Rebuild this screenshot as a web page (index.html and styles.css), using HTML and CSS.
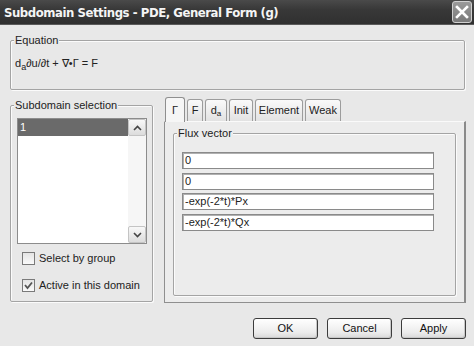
FILE: index.html
```html
<!DOCTYPE html>
<html>
<head>
<meta charset="utf-8">
<link rel="stylesheet" href="styles.css">
</head>
<body>
<div class="dialog">
  <div class="titlebar">
    <span class="title">Subdomain Settings - PDE, General Form (g)</span>
    <span class="close"><svg width="14" height="14" viewBox="0 0 14 14"><path d="M2 2 L12 12 M12 2 L2 12" stroke="#fff" stroke-width="2.6" stroke-linecap="square"/></svg></span>
  </div>
  <div class="content">
    <div class="group eq">
      <span class="legend">Equation</span>
      <div class="eqtext">d<sub>a</sub>∂u/∂t + ∇•Γ = F</div>
    </div>
    <div class="row">
      <div class="group sub">
        <span class="legend">Subdomain selection</span>
        <div class="listbox">
          <div class="items"><div class="item sel">1</div></div>
          <div class="scroll">
            <div class="sbtn"><svg width="9" height="6" viewBox="0 0 9 6"><path d="M1 5 L4.5 1.5 L8 5" fill="none" stroke="#444" stroke-width="1.6"/></svg></div>
            <div class="track"></div>
            <div class="sbtn"><svg width="9" height="6" viewBox="0 0 9 6"><path d="M1 1 L4.5 4.5 L8 1" fill="none" stroke="#444" stroke-width="1.6"/></svg></div>
          </div>
        </div>
        <label class="check first"><span class="box"></span>Select by group</label>
        <label class="check second"><span class="box"><svg width="11" height="11" viewBox="0 0 11 11"><path d="M2 5 L4.5 8 L9 2.5" fill="none" stroke="#555" stroke-width="1.8"/></svg></span>Active in this domain</label>
      </div>
      <div class="tabs">
        <div class="tabstrip">
          <span class="tab active">Γ</span>
          <span class="tab t-f">F</span>
          <span class="tab t-d">d<sub>a</sub></span>
          <span class="tab t-i">Init</span>
          <span class="tab t-e">Element</span>
          <span class="tab t-w">Weak</span>
        </div>
        <div class="panel">
          <div class="group flux">
            <span class="legend">Flux vector</span>
            <div class="field">0</div>
            <div class="field">0</div>
            <div class="field">-exp(-2*t)*Px</div>
            <div class="field">-exp(-2*t)*Qx</div>
          </div>
        </div>
      </div>
    </div>
    <div class="buttons">
      <span class="btn">OK</span>
      <span class="btn">Cancel</span>
      <span class="btn">Apply</span>
    </div>
  </div>
</div>
</body>
</html>
```

FILE: styles.css
```css
* { box-sizing: border-box; }
html, body { margin: 0; padding: 0; }
body { background: #e8e8e8; font-family: "Liberation Sans", Arial, sans-serif; font-size: 11px; color: #111; }
.dialog { width: 474px; height: 346px; background: #e8e8e8; overflow: hidden; }
.titlebar {
  height: 25px;
  background: linear-gradient(#4a4a4a, #383838 40%, #303030);
  border-bottom: 1px solid #5a5a5a;
  display: flex; align-items: center; justify-content: space-between;
  padding: 0 2px 0 4px;
}
.title { color: #f4f4f4; font-weight: bold; font-size: 13px; font-family: "DejaVu Sans Condensed", "DejaVu Sans", sans-serif; letter-spacing: -0.45px; }
.close {
  width: 20px; height: 22px;
  background: linear-gradient(#9a9a9a, #7a7a7a);
  border: 1px solid #d0d0d0; border-radius: 3px;
  display: flex; align-items: center; justify-content: center;
}
.content { padding: 0 8px 0 10px; }
.group {
  position: relative;
  border: 1px solid #a4a4a4;
  box-shadow: inset 1px 1px 0 #fbfbfb, 1px 1px 0 #fbfbfb;
  border-radius: 2px;
}
.legend {
  position: absolute; top: -7px; left: 3px;
  background: #e8e8e8; padding: 0 1px; line-height: 13px; color: #222;
}
.eq { margin-top: 15px; width: 455px; height: 50px; padding: 15px 0 0 4px; }
.eqtext { line-height: 14px; color: #222; }
sub { font-size: 9px; vertical-align: -3px; line-height: 0; }
.row { display: flex; margin-top: 7px; }
.sub { margin-top: 8px; width: 143px; height: 197px; padding: 12px 0 0 6px; }
.listbox { width: 130px; height: 126px; border: 1px solid #8c8c8c; background: #fff; display: flex; }
.items { flex: 1; }
.item { height: 17px; line-height: 17px; padding-left: 2px; color: #fff; }
.item.sel { background: #6a6a6a; }
.scroll { width: 18px; display: flex; flex-direction: column; background: #f6f6f6; }
.sbtn { height: 17px; background: linear-gradient(#f8f8f8, #dcdcdc); border: 1px solid #c4c4c4; border-radius: 2px; display: flex; align-items: center; justify-content: center; }
.track { flex: 1; }
.check { display: flex; align-items: center; gap: 4px; padding-left: 5px; line-height: 13px; color: #222; }
.check.first { margin-top: 8px; }
.check.second { margin-top: 14px; }
.box { width: 13px; height: 13px; border: 1px solid #7a7a7a; background: linear-gradient(#e4e4e4, #fafafa); display: flex; align-items: center; justify-content: center; }
.tabs { margin-left: 11px; width: 302px; display: flex; flex-direction: column; }
.tabstrip { display: flex; align-items: flex-end; height: 24px; padding-left: 1px; position: relative; z-index: 1; }
.tab {
  height: 22px; line-height: 20px; text-align: center;
  border: 1px solid #9c9c9c; border-bottom: none; border-radius: 3px 3px 0 0;
  background: linear-gradient(#fafafa, #e2e2e2);
  margin-right: 2px; color: #222;
}
.tab sub { font-size: 8px; vertical-align: -2px; }
.tab.active { width: 20px; height: 25px; margin-bottom: -1px; background: #f6f6f6; border-color: #8f8f8f; line-height: 24px; }
.t-f { width: 16px; }
.t-d { width: 22px; }
.t-i { width: 24px; }
.t-e { width: 48px; }
.t-w { width: 36px; }
.panel {
  height: 182px; border: 1px solid #8f8f8f; border-top-color: #fafafa;
  border-right: 2px solid #8a8a8a; background: #ececec;
  padding: 11px 0 0 8px;
}
.flux { width: 283px; height: 163px; padding: 18px 0 0 8px; }
.flux .legend { background: #ececec; }
.field {
  width: 252px; height: 17px; margin-bottom: 3.6px;
  border: 1px solid #8a8a8a; box-shadow: inset 1px 1px 0 #b0b0b0;
  background: #fff; line-height: 15px; padding-left: 2px; color: #222;
}
.buttons { display: flex; justify-content: flex-end; gap: 9px; margin-top: 15px; }
.btn {
  width: 65px; height: 21px; line-height: 19px; text-align: center;
  border: 1px solid #3c3c3c; border-radius: 3px;
  background: linear-gradient(#ffffff, #ececec 70%, #d8d8d8);
  box-shadow: inset -1px -1px 0 #c8c8c8;
  color: #111;
}
```
